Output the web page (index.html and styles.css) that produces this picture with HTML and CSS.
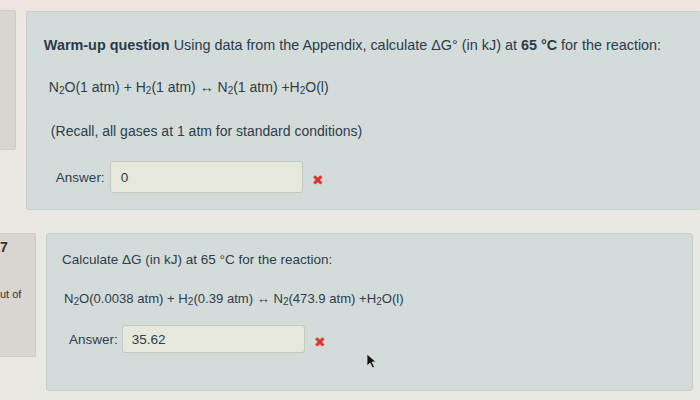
FILE: index.html
```html
<!DOCTYPE html>
<html>
<head>
<meta charset="utf-8">
<link rel="stylesheet" href="styles.css">
</head>
<body>
<div class="page">
  <div class="row row1">
    <div class="side side1"></div>
    <div class="card card1">
      <p class="line title"><b>Warm-up question</b> Using data from the Appendix, calculate ΔG° (in kJ) at <b>65 °C</b> for the reaction:</p>
      <p class="line eq">N<sub>2</sub>O(1 atm) + H<sub>2</sub>(1 atm) ↔ N<sub>2</sub>(1 atm) +H<sub>2</sub>O(l)</p>
      <p class="line recall">(Recall, all gases at 1 atm for standard conditions)</p>
      <div class="answer a1">
        <span class="lbl">Answer:</span>
        <span class="input in1">0</span>
        <span class="wrong">✖</span>
      </div>
    </div>
  </div>
  <div class="row row2">
    <div class="side side2">
      <div class="qn">7</div>
      <div class="mk">ut of</div>
    </div>
    <div class="card card2">
      <p class="line title2">Calculate ΔG (in kJ) at 65 °C for the reaction:</p>
      <p class="line eq2">N<sub>2</sub>O(0.0038 atm) + H<sub>2</sub>(0.39 atm) ↔ N<sub>2</sub>(473.9 atm) +H<sub>2</sub>O(l)</p>
      <div class="answer a2">
        <span class="lbl">Answer:</span>
        <span class="input in2">35.62</span>
        <span class="wrong">✖</span>
      </div>
    </div>
  </div>
</div>
<svg class="cursor" width="12" height="16" viewBox="0 0 12 16"><path d="M1 1 L1 13 L4 10 L6.5 15 L8.5 14 L6 9 L10 9 Z" fill="#111" stroke="#ddd" stroke-width="0.8"/></svg>
</body>
</html>
```
FILE: styles.css
```css
html, body {
  margin: 0;
  padding: 0;
}
body {
  width: 700px;
  height: 400px;
  overflow: hidden;
  background: linear-gradient(180deg, #efe3de 0px, #ece8e4 30px, #e9e8e3 100%);
  font-family: "Liberation Sans", Arial, sans-serif;
  color: #2e3d4a;
  position: relative;
}
.page {
  display: flex;
  flex-direction: column;
  padding-top: 10px;
}
.row {
  display: flex;
  align-items: flex-start;
}
.side {
  background: #d9d5d1;
  border: 1px solid #cfcbc7;
  border-left: none;
  border-radius: 0 2px 2px 0;
  overflow: hidden;
  box-sizing: border-box;
}
.side1 {
  width: 16px;
  height: 140px;
}
.side2 {
  width: 36px;
  height: 124px;
  display: flex;
  flex-direction: column;
  align-items: flex-start;
  font-size: 11px;
  color: #333;
}
.qn {
  margin-top: 6px;
  font-size: 14px;
  font-weight: bold;
  line-height: 14px;
}
.mk {
  margin-top: 34px;
  line-height: 12px;
}
.card {
  background: #d4dcdb;
  border: 1px solid #c6cfce;
  border-radius: 3px;
  box-sizing: border-box;
}
.card1 {
  margin-left: 10px;
  margin-top: 1px;
  width: 680px;
  height: 199px;
  padding: 25px 0 0 17px;
  border-right: none;
}
.line {
  margin: 0;
  font-size: 14px;
  line-height: 17px;
  white-space: nowrap;
}
.title {
  font-size: 14.4px;
  color: #2b3b49;
}
.eq {
  margin-top: 25px;
  margin-left: 5px;
}
.recall {
  margin-top: 27px;
  margin-left: 7px;
}
sub {
  font-size: 10px;
  vertical-align: -2px;
  line-height: 0;
}
.answer {
  display: flex;
  align-items: center;
  font-size: 13.5px;
}
.a1 {
  margin-top: 21px;
  margin-left: 12px;
}
.lbl {
  margin-right: 5px;
}
.input {
  display: flex;
  align-items: center;
  box-sizing: border-box;
  background: #e6e8dc;
  border: 1px solid #c4c8bf;
  border-radius: 3px;
  padding-left: 10px;
  font-size: 13.5px;
}
.in1 {
  width: 193px;
  height: 32px;
}
.in2 {
  width: 183px;
  height: 28px;
  padding-left: 9px;
}
.wrong {
  color: #e2342e;
  font-size: 14px;
  margin-left: 9px;
  margin-top: 6px;
}
.row2 {
  margin-top: 23px;
}
.card2 {
  margin-left: 10px;
  width: 647px;
  height: 158px;
  padding: 17px 0 0 15px;
}
.title2 {
  font-size: 13.5px;
}
.eq2 {
  margin-top: 22px;
  margin-left: 2px;
  font-size: 13.1px;
}
.a2 {
  margin-top: 18px;
  margin-left: 7px;
}
.a2 .lbl {
  margin-right: 4px;
}
.cursor {
  position: absolute;
  left: 366px;
  top: 353px;
}
```
